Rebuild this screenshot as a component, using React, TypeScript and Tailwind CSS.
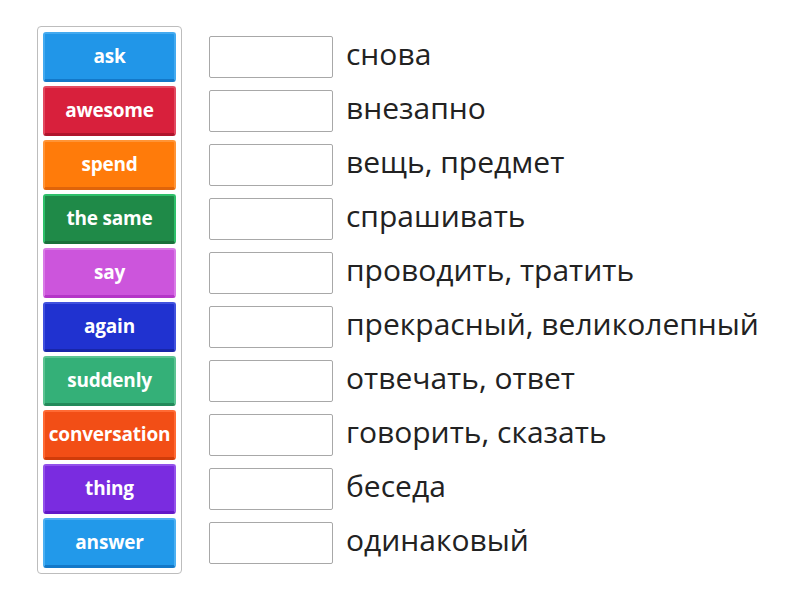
const tiles = [
  { word: "ask", cls: "bg-[#2196e8] border-[#43aaf0] border-b-[#1378c8]" },
  { word: "awesome", cls: "bg-[#d8203c] border-[#e24a60] border-b-[#b0142c]" },
  { word: "spend", cls: "bg-[#ff7b0a] border-[#ff9436] border-b-[#e0640a]" },
  { word: "the same", cls: "bg-[#1f8a48] border-[#2fc06a] border-b-[#19703a]" },
  { word: "say", cls: "bg-[#cc55dc] border-[#d97be6] border-b-[#b535c8]" },
  { word: "again", cls: "bg-[#2032d0] border-[#4152de] border-b-[#1826a8]" },
  { word: "suddenly", cls: "bg-[#34b078] border-[#5cc492] border-b-[#238a5a]" },
  { word: "conversation", cls: "bg-[#f24e16] border-[#ff6a34] border-b-[#d03c0a]" },
  { word: "thing", cls: "bg-[#7a2ce0] border-[#9452ea] border-b-[#6218c8]" },
  { word: "answer", cls: "bg-[#2299ea] border-[#4cb0f2] border-b-[#1378c8]" },
]

const definitions = [
  "снова",
  "внезапно",
  "вещь, предмет",
  "спрашивать",
  "проводить, тратить",
  "прекрасный, великолепный",
  "отвечать, ответ",
  "говорить, сказать",
  "беседа",
  "одинаковый",
]

export default function App() {
  return (
    <div className="flex w-[800px] h-[600px] bg-white pl-[37px] pt-[26px] font-['Open_Sans','Noto_Sans',sans-serif]">
      <div className="flex flex-col gap-[4px] self-start p-[5px] border border-[#bdbdbd] rounded-[4px]">
        {tiles.map((t) => (
          <div
            key={t.word}
            className={`flex items-center justify-center w-[133px] h-[50px] rounded-[3px] border-[2px] border-b-[3px] text-white font-bold text-[19px] leading-none whitespace-nowrap tracking-[-0.2px] ${t.cls}`}
          >
            {t.word}
          </div>
        ))}
      </div>
      <div className="flex flex-col gap-[12px] ml-[27px] pt-[10px]">
        {definitions.map((d) => (
          <div key={d} className="flex items-center h-[42px]">
            <div className="w-[124px] h-[42px] border border-[#a8a8a8] rounded-[2px] bg-white" />
            <span className="ml-[13px] mb-[6px] text-[30px] leading-none text-[#222] whitespace-nowrap">{d}</span>
          </div>
        ))}
      </div>
    </div>
  )
}
